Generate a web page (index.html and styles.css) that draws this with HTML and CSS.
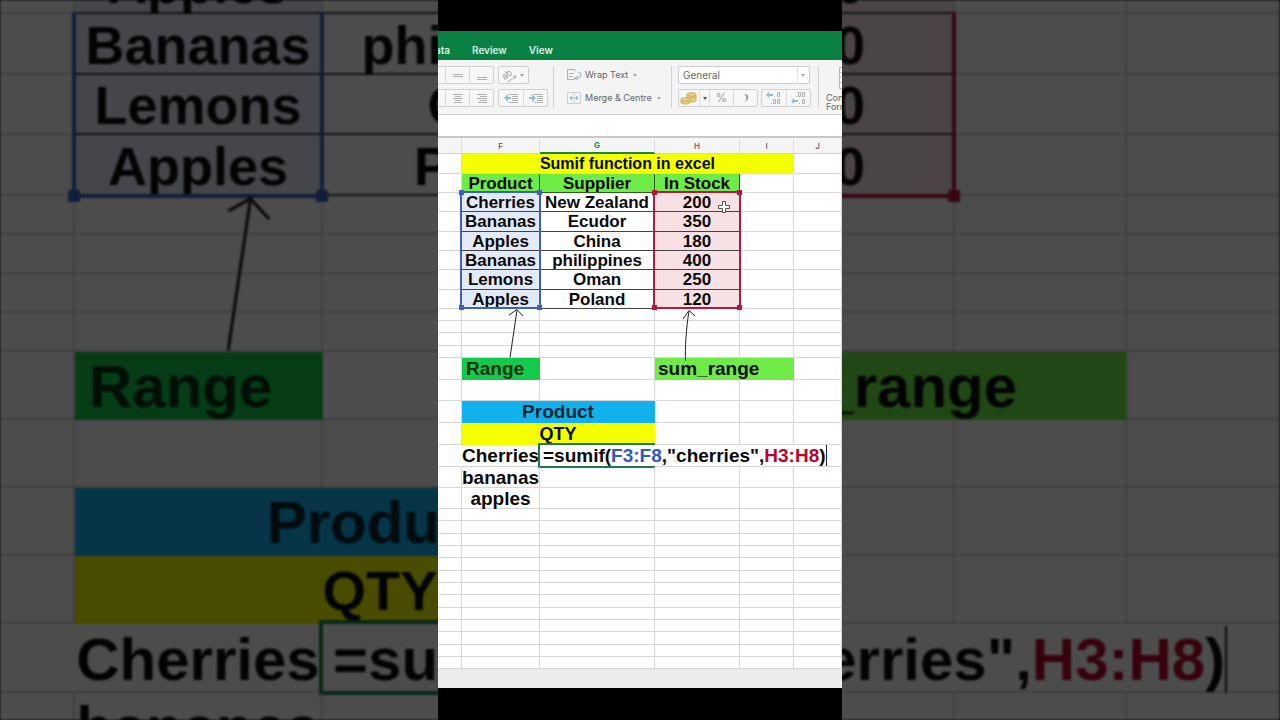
FILE: index.html
```html
<!DOCTYPE html>
<html lang="en">
<head>
<meta charset="utf-8">
<title>Sumif function in excel</title>
<link rel="stylesheet" href="styles.css">
</head>
<body>
<div class="stage">

  <!-- Enlarged, dimmed copy of the sheet behind the video -->
  <div class="backdrop" aria-hidden="true">
    <div class="sheet sheet-large">
      <table class="cells">
        <colgroup><col class="col-e"><col class="col-f"><col class="col-g"><col class="col-h"><col class="col-i"><col></colgroup>
        <tbody>
          <tr class="data"><td></td><td class="blue">Apples</td><td>China</td><td class="red">180</td><td></td><td></td></tr>
          <tr class="data tall"><td></td><td class="blue">Bananas<span class="range range-f"><i></i><i></i></span></td><td>philippines</td><td class="red">400<span class="range range-h"><i></i><i></i></span></td><td></td><td></td></tr>
          <tr class="data short"><td></td><td class="blue">Lemons</td><td>Oman</td><td class="red">250</td><td></td><td></td></tr>
          <tr class="data"><td></td><td class="blue">Apples</td><td>Poland</td><td class="red">120</td><td></td><td></td></tr>
          <tr class="slim"><td></td><td></td><td></td><td></td><td></td><td></td></tr>
          <tr class="slim"><td></td><td></td><td></td><td></td><td></td><td></td></tr>
          <tr class="slim"><td></td><td></td><td></td><td></td><td></td><td></td></tr>
          <tr class="slim"><td></td><td></td><td></td><td></td><td></td><td></td></tr>
          <tr class="wide"><td></td><td class="range-label">Range</td><td></td><td class="sum-label" colspan="2">sum_range</td><td></td></tr>
          <tr class="wide"><td></td><td></td><td></td><td></td><td></td><td></td></tr>
          <tr class="wide"><td></td><td class="product" colspan="2">Product</td><td></td><td></td><td></td></tr>
          <tr class="wide"><td></td><td class="qty" colspan="2">QTY</td><td></td><td></td><td></td></tr>
          <tr class="wide tall"><td class="open"></td><td>Cherries</td><td class="formula" colspan="4"><span class="active-cell"></span><span class="formula-text">=sumif(<b class="ref-f">F3:F8</b>,"cherries",<b class="ref-h">H3:H8</b>)</span></td></tr>
          <tr class="wide"><td></td><td>bananas</td><td></td><td></td><td></td><td></td></tr>
        </tbody>
      </table>
      <svg class="ink" viewBox="0 78 404 242">
        <path d="M72 203.500L79 156M72 159.500L79 155.500L85 162"/>
      </svg>
    </div>
  </div>

  <main class="video">
    <nav class="tabs" aria-label="Ribbon tabs">
      <button type="button" class="first-tab">ata</button>
      <button type="button">Review</button>
      <button type="button">View</button>
    </nav>

    <div class="ribbon">
      <div class="group align-group">
        <div class="segments">
          <button type="button" class="edge" aria-label="Top align"></button>
          <button type="button" class="seg" aria-label="Middle align"><svg width="12" height="12" viewBox="0 0 12 12"><path class="gray" d="M1 5.500h10M1 7.500h10"/></svg></button>
          <button type="button" class="seg" aria-label="Bottom align"><svg width="12" height="12" viewBox="0 0 12 12"><path class="gray" d="M1 8.500h10M1 10.500h10"/></svg></button>
        </div>
        <div class="segments">
          <button type="button" class="edge" aria-label="Align left"></button>
          <button type="button" class="seg" aria-label="Align centre"><svg width="12" height="12" viewBox="0 0 12 12"><path class="gray" d="M1 2.500h10M3 4.500h6M1 6.500h10M3 8.500h6M2 10.500h8"/></svg></button>
          <button type="button" class="seg" aria-label="Align right"><svg width="12" height="12" viewBox="0 0 12 12"><path class="gray" d="M1 2.500h10M4 4.500h7M1 6.500h10M4 8.500h7M2 10.500h9"/></svg></button>
        </div>
      </div>

      <div class="group indent-group">
        <div class="segments">
          <button type="button" class="orient" aria-label="Orientation"><svg width="24" height="15" viewBox="0 0 24 15"><text class="tiny" x="1" y="10" transform="rotate(-38 5 9)">ab</text><path class="gray" d="M6 14L14 8M14 8h-3M14 8l-1 3"/><path class="fill-gray" d="M18 6h4l-2 3z"/></svg></button>
        </div>
        <div class="segments">
          <button type="button" class="seg" aria-label="Decrease indent"><svg width="16" height="12" viewBox="0 0 16 12"><path class="sky" d="M1 6l4-4v3h3v2H5v3z"/><path class="gray" d="M6 2.500h9M9 4.500h6M9 6.500h6M9 8.500h6M6 10.500h9"/></svg></button>
          <button type="button" class="seg" aria-label="Increase indent"><svg width="16" height="12" viewBox="0 0 16 12"><path class="sky" d="M8 6l-4-4v3H1v2h3v3z"/><path class="gray" d="M6 2.500h9M9 4.500h6M9 6.500h6M9 8.500h6M6 10.500h9"/></svg></button>
        </div>
      </div>

      <div class="group text-group">
        <button type="button" class="plain"><svg width="17" height="14" viewBox="0 0 17 14"><path class="gray" d="M9 1.500H1.500v10H9M9 1.500v2M9 9v2.500M3 5.500h5M3 8.500h4"/><path class="blue-line" d="M12 4c4 0 4 6 0 6H9.500M12 7.500L9.500 10L12 12.500"/></svg>Wrap Text<span class="caret"></span></button>
        <button type="button" class="plain"><svg width="17" height="14" viewBox="0 0 17 14"><path class="gray light" d="M1.500 1.500h13v11h-13zM8 1.500v3M8 9.500v3"/><path class="blue-line" d="M4 7h8M6 5L4 7l2 2M10 5l2 2l-2 2"/></svg>Merge &amp; Centre<span class="caret"></span></button>
      </div>

      <div class="group number-group">
        <label class="format"><select aria-label="Number format"><option>General</option></select><span class="caret"></span></label>
        <div class="number-row">
          <div class="segments">
            <button type="button" class="coins" aria-label="Currency"><svg width="18" height="14" viewBox="0 0 18 14"><path class="coin" d="M7 3.500v6c0 2 9 2 9 0v-6"/><ellipse class="coin" cx="11.500" cy="3.500" rx="4.500" ry="1.800"/><path class="coin" d="M1 8.500v3c0 2 9 2 9 0v-3"/><ellipse class="coin" cx="5.500" cy="8.500" rx="4.500" ry="1.800"/><path class="coin" d="M10 6.500c2 1 6 0 6-1"/></svg></button>
            <button type="button" class="drop" aria-label="Currency options"><span class="caret dark"></span></button>
            <button type="button" class="seg percent" aria-label="Percent">%</button>
            <button type="button" class="seg" aria-label="Comma style"><svg width="8" height="10" viewBox="0 0 8 10"><path class="comma" d="M2 1c6 0 6 6 0 8c3-3 3-5 0-8z"/></svg></button>
          </div>
          <div class="segments">
            <button type="button" class="seg" aria-label="Increase decimal"><svg width="18" height="14" viewBox="0 0 18 14"><path class="sky" d="M1 4l3-3v2h4v2H4v2z"/><path class="gray" d="M9.500 5.500v1M12.500 1.500h2v4h-2zM6.500 12v1M8.500 8.500h2v4h-2zM12.500 8.500h2v4h-2z"/></svg></button>
            <button type="button" class="seg" aria-label="Decrease decimal"><svg width="18" height="14" viewBox="0 0 18 14"><path class="sky" d="M1 10l3-3v2h4v2H4v2z"/><path class="gray" d="M6.500 5v1M8.500 1.500h2v4h-2zM12.500 1.500h2v4h-2zM9.500 12v1M12.500 8.500h2v4h-2z"/></svg></button>
          </div>
        </div>
      </div>

      <button type="button" class="conditional">
        <svg width="22" height="22" viewBox="0 0 22 22"><path fill="#fff" stroke="#b8b8b8" d="M.5.500h21v21H.5z"/><path stroke="#c8c8c8" d="M1 5.500h20M1 10.500h20M1 15.500h20"/><path fill="#e8898b" d="M6 1h7v5H6z"/><path fill="#8fb8e4" d="M6 7h7v13H6z"/></svg>
        <span>Conditional<br>Formatting</span>
      </button>
    </div>

    <input class="formula-bar" type="text" aria-label="Formula bar">

    <div class="sheet">
      <table class="cells">
        <colgroup><col class="col-e"><col class="col-f"><col class="col-g"><col class="col-h"><col class="col-i"><col></colgroup>
        <thead>
          <tr><th></th><th>F</th><th class="current">G</th><th>H</th><th>I</th><th>J</th></tr>
        </thead>
        <tbody>
          <tr class="data tall"><td></td><td class="title" colspan="4">Sumif function in excel</td><td></td></tr>
          <tr class="data"><td></td><td class="head">Product</td><td class="head">Supplier</td><td class="head">In Stock</td><td></td><td></td></tr>
          <tr class="data"><td></td><td class="blue">Cherries<span class="range range-f"><i></i><i></i><i></i><i></i></span></td><td>New Zealand</td><td class="red">200<span class="range range-h"><i></i><i></i><i></i><i></i></span></td><td></td><td></td></tr>
          <tr class="data tall"><td></td><td class="blue">Bananas</td><td>Ecudor</td><td class="red">350</td><td></td><td></td></tr>
          <tr class="data"><td></td><td class="blue">Apples</td><td>China</td><td class="red">180</td><td></td><td></td></tr>
          <tr class="data"><td></td><td class="blue">Bananas</td><td>philippines</td><td class="red">400</td><td></td><td></td></tr>
          <tr class="data tall"><td></td><td class="blue">Lemons</td><td>Oman</td><td class="red">250</td><td></td><td></td></tr>
          <tr class="data"><td></td><td class="blue">Apples</td><td>Poland</td><td class="red">120</td><td></td><td></td></tr>
          <tr class="slim"><td></td><td></td><td></td><td></td><td></td><td></td></tr>
          <tr class="slim"><td></td><td></td><td></td><td></td><td></td><td></td></tr>
          <tr class="slim tall"><td></td><td></td><td></td><td></td><td></td><td></td></tr>
          <tr class="slim"><td></td><td></td><td></td><td></td><td></td><td></td></tr>
          <tr class="wide"><td></td><td class="range-label">Range</td><td></td><td class="sum-label" colspan="2">sum_range</td><td></td></tr>
          <tr class="wide short"><td></td><td></td><td></td><td></td><td></td><td></td></tr>
          <tr class="wide"><td></td><td class="product" colspan="2">Product</td><td></td><td></td><td></td></tr>
          <tr class="wide"><td></td><td class="qty" colspan="2">QTY</td><td></td><td></td><td></td></tr>
          <tr class="wide"><td class="open"></td><td>Cherries</td><td class="formula" colspan="4"><span class="active-cell"></span><span class="formula-text">=sumif(<b class="ref-f">F3:F8</b>,"cherries",<b class="ref-h">H3:H8</b>)</span></td></tr>
          <tr class="wide short"><td></td><td>bananas</td><td></td><td></td><td></td><td></td></tr>
          <tr class="wide short"><td></td><td>apples</td><td></td><td></td><td></td><td></td></tr>
          <tr class="slim"><td></td><td></td><td></td><td></td><td></td><td></td></tr>
          <tr class="slim tall"><td></td><td></td><td></td><td></td><td></td><td></td></tr>
          <tr class="slim"><td></td><td></td><td></td><td></td><td></td><td></td></tr>
          <tr class="slim"><td></td><td></td><td></td><td></td><td></td><td></td></tr>
          <tr class="slim tall"><td></td><td></td><td></td><td></td><td></td><td></td></tr>
          <tr class="slim"><td></td><td></td><td></td><td></td><td></td><td></td></tr>
          <tr class="slim"><td></td><td></td><td></td><td></td><td></td><td></td></tr>
          <tr class="slim tall"><td></td><td></td><td></td><td></td><td></td><td></td></tr>
          <tr class="slim"><td></td><td></td><td></td><td></td><td></td><td></td></tr>
          <tr class="slim"><td></td><td></td><td></td><td></td><td></td><td></td></tr>
          <tr class="slim tall"><td></td><td></td><td></td><td></td><td></td><td></td></tr>
          <tr class="slim"><td></td><td></td><td></td><td></td><td></td><td></td></tr>
          <tr class="slim"><td></td><td></td><td></td><td></td><td></td><td></td></tr>
        </tbody>
      </table>
      <svg class="ink" viewBox="0 -16 404 531" aria-hidden="true">
        <path d="M72 203.500L79 156M71 161L79 155.500L85 162"/>
        <path d="M247.500 207C247 195 248 175 251 157M245 165L251 156.500L257 162"/>
        <path class="pointer" d="M284.500 47.500h3v4h4v3h-4v4h-3v-4h-4v-3h4z"/>
      </svg>
    </div>
    <div class="status"></div>
  </main>
</div>
</body>
</html>
```

FILE: styles.css
```css
* { box-sizing: border-box; }

body {
  margin: 0;
  background: #000;
  font-family: Inter, "Liberation Sans", sans-serif;
}

button, select, input {
  font: inherit;
  color: inherit;
  margin: 0;
  padding: 0;
  border: 0;
  background: none;
}

.stage {
  position: relative;
  display: flex;
  justify-content: center;
  min-height: 100vh;
  overflow: hidden;
}

/* backdrop */
.backdrop {
  position: absolute;
  inset: 0;
  overflow: hidden;
  background: #fff;
  filter: brightness(0.3) blur(1px);
}

/* video column */
.video {
  position: relative;
  width: 404px;
  max-width: 100%;
  padding: 31px 0 32px;
  background: #000;
  overflow: hidden;
}

.tabs {
  display: flex;
  align-items: center;
  gap: 22px;
  height: 29px;
  padding-top: 8px;
  background: #0a8042;
  color: #dcf0e4;
  font-size: 10px;
  font-weight: 600;
}

.first-tab {
  display: flex;
  justify-content: flex-end;
  width: 12px;
}

/* ribbon */
.ribbon {
  display: flex;
  height: 55px;
  padding-top: 6px;
  overflow: hidden;
  background: #f4f4f4;
  border-bottom: 1px solid #cfcfcf;
  color: #666;
  font-size: 9px;
  line-height: 10px;
}

.group {
  display: flex;
  flex: none;
  flex-direction: column;
  gap: 5px;
  height: 42px;
}

.align-group { margin-right: 4px; }
.indent-group { padding-right: 5px; margin-right: 12px; border-right: 1px solid #d2d2d2; }
.text-group { width: 106px; margin-right: 6px; border-right: 1px solid #d2d2d2; }
.number-group { padding-right: 7px; margin-right: 6px; border-right: 1px solid #d2d2d2; }

.segments {
  display: flex;
  align-self: flex-start;
  height: 18px;
  border: 1px solid #d0d0d0;
  border-radius: 2px;
  background: #f7f7f7;
}

.align-group .segments { border-left: 0; border-radius: 0 2px 2px 0; }

.segments button {
  display: flex;
  align-items: center;
  justify-content: center;
}

.segments button + button { border-left: 1px solid #dcdcdc; }
.edge { width: 7px; }
.seg { width: 24px; }
.orient { width: 29px; }
.coins { width: 20px; }
.drop { width: 10px; }
.percent { color: #999; font-size: 12px; }

.plain {
  display: flex;
  align-items: center;
  gap: 2px;
  height: 18px;
  white-space: nowrap;
}

.caret {
  flex: none;
  margin-left: 3px;
  border: 2px solid transparent;
  border-top: 3px solid #aaa;
  border-bottom: 0;
}

.caret.dark { margin: 0; border-top-color: #555; }

.format {
  display: flex;
  align-items: center;
  width: 132px;
  height: 18px;
  padding-right: 4px;
  border: 1px solid #d0d0d0;
  background: #fff;
  font-size: 10px;
}

.format select {
  flex: 1;
  height: 16px;
  padding-left: 4px;
  appearance: none;
  border-right: 1px solid #e4e4e4;
}

.number-row { display: flex; gap: 3px; }

.conditional {
  display: flex;
  flex: none;
  flex-direction: column;
  align-items: center;
  gap: 4px;
  width: 50px;
  padding-top: 1px;
  line-height: 9px;
}

.conditional span { text-align: left; }

svg { display: block; flex: none; }
.gray { fill: none; stroke: #b0b0b0; }
.light { stroke: #cdcdcd; }
.blue-line { fill: none; stroke: #80b1dc; }
.sky { fill: #8fbde2; }
.fill-gray, .comma { fill: #a0a0a0; }
.coin { fill: #e9cf8c; stroke: #cba85a; }
.tiny { fill: #999; font-size: 9px; }

.formula-bar {
  display: block;
  width: 100%;
  height: 23px;
  background: #fff;
  border-bottom: 2px solid #c9c9c9;
  border-radius: 0;
}

/* sheet */
.sheet {
  --f: 78px;
  --g: 115px;
  --h: 85px;
  --data: 19px;
  --data-tall: 20px;
  --slim: 12px;
  --slim-tall: 13px;
  --wide: 22px;
  --wide-short: 21px;
  --range-height: 118px;
  --line: 1px;
  --frame: 2px;
  --handle: 5px;
  position: relative;
  background: #fff;
  color: #0b0b0b;
  font-family: "Liberation Sans", Arial, sans-serif;
  font-size: 17px;
  font-weight: 700;
}

.cells {
  width: 100%;
  table-layout: fixed;
  border-collapse: separate;
  border-spacing: 0;
}

.col-e { width: 24px; }
.col-f { width: var(--f); }
.col-g { width: var(--g); }
.col-h { width: var(--h); }
.col-i { width: 54px; }

.cells th {
  height: 16px;
  padding: 0;
  background: #f5f5f5;
  border-right: 1px solid #dedede;
  border-bottom: 1px solid #d0d0d0;
  color: #555;
  font-family: Inter, sans-serif;
  font-size: 8px;
  font-weight: 500;
  line-height: 10px;
}

.cells .current { color: #1c8450; font-weight: 700; border-bottom: 2px solid #1c8450; }

.cells td {
  position: relative;
  padding: 0;
  border-right: var(--line) solid #d6d6d6;
  border-bottom: var(--line) solid #d6d6d6;
  line-height: 1;
  text-align: center;
  white-space: nowrap;
}

.data { height: var(--data); }
.data.tall { height: var(--data-tall); }
.slim { height: var(--slim); font-size: 0; }
.slim.tall { height: var(--slim-tall); }
.wide { height: var(--wide); font-size: 19px; }
.wide.short { height: var(--wide-short); }

.cells .title { background: #f4ff00; border-color: #f4ff00; font-size: 16px; }
.cells .head { background: #6feb48; border-color: #2d5c22; }
.cells .blue { background: #e3eaf7; border-bottom-color: #444; }
.cells .blue + td { border-bottom-color: #444; }
.cells .red { background: #f8e1e4; border-bottom-color: #444; }
.cells .range-label { padding-left: 4px; background: #13ca4c; border-color: #13ca4c; text-align: left; color: #04320f; }
.cells .sum-label { padding-left: 3px; background: #6feb48; border-color: #6feb48; text-align: left; }
.cells .product { background: #11b1ed; border-color: #11b1ed; color: #06242f; }
.cells .qty { background: #f4ff00; border-color: #f4ff00; font-size: 18px; }
.cells .open { border-right-color: transparent; }
.cells .formula { text-align: left; }

.range {
  position: absolute;
  z-index: 1;
  top: -2px;
  left: -2px;
  height: var(--range-height);
  border: var(--frame) solid;
}

.range-f { width: calc(var(--f) + 3px); color: #3c5fc0; }
.range-h { width: calc(var(--h) + 3px); color: #b8163f; }

.range i {
  position: absolute;
  width: var(--handle);
  height: var(--handle);
  background: currentColor;
}

.range i:nth-child(odd) { left: -3px; }
.range i:nth-child(even) { right: -3px; }
.range i:nth-child(-n+2) { bottom: -3px; }
.range i:nth-child(n+3) { top: -3px; }

.active-cell {
  position: absolute;
  top: -2px;
  bottom: -2px;
  left: -2px;
  width: calc(var(--g) + 2px);
  border: var(--frame) solid #1d7a45;
  border-right: 0;
}

.formula-text {
  position: relative;
  margin-left: 3px;
  border-right: var(--line) solid #222;
}

.ref-f { color: #3557c4; }
.ref-h { color: #b5062f; }

.ink {
  position: absolute;
  z-index: 2;
  top: 0;
  left: 0;
  width: 100%;
  fill: none;
  stroke: #222;
  pointer-events: none;
}

.pointer { fill: #fff; stroke: #555; }

.status { height: 19px; background: #ececec; }

/* enlarged sheet */
.sheet-large {
  --f: 248px;
  --g: 364px;
  --h: 268px;
  --data: 61px;
  --data-tall: 61px;
  --slim: 39px;
  --wide: 68px;
  --range-height: 186px;
  --line: 2px;
  --frame: 4px;
  --handle: 12px;
  margin-top: -47px;
  font-size: 54px;
}

.sheet-large .col-e { width: 75px; }
.sheet-large .col-i { width: 172px; }
.sheet-large .data.short { height: 60px; }
.sheet-large .data td { padding-top: 2px; }
.sheet-large .wide { font-size: 60px; }
.sheet-large .wide td { padding-top: 4px; }
.sheet-large .wide.tall { height: 69px; }
.sheet-large .qty { font-size: 56px; }
.sheet-large .range-label { padding-left: 14px; }
.sheet-large .sum-label { padding-left: 10px; }
.sheet-large .range { left: -3px; border-top: 0; }
.sheet-large .range-f { width: calc(var(--f) + 4px); }
.sheet-large .range-h { width: calc(var(--h) + 4px); }
.sheet-large .range i:nth-child(odd) { left: -8px; }
.sheet-large .range i:nth-child(even) { right: -8px; }
.sheet-large .range i:nth-child(-n+2) { bottom: -8px; }
.sheet-large .active-cell { top: -4px; bottom: -4px; left: -4px; }
.sheet-large .formula-text { margin-left: 10px; }
```
